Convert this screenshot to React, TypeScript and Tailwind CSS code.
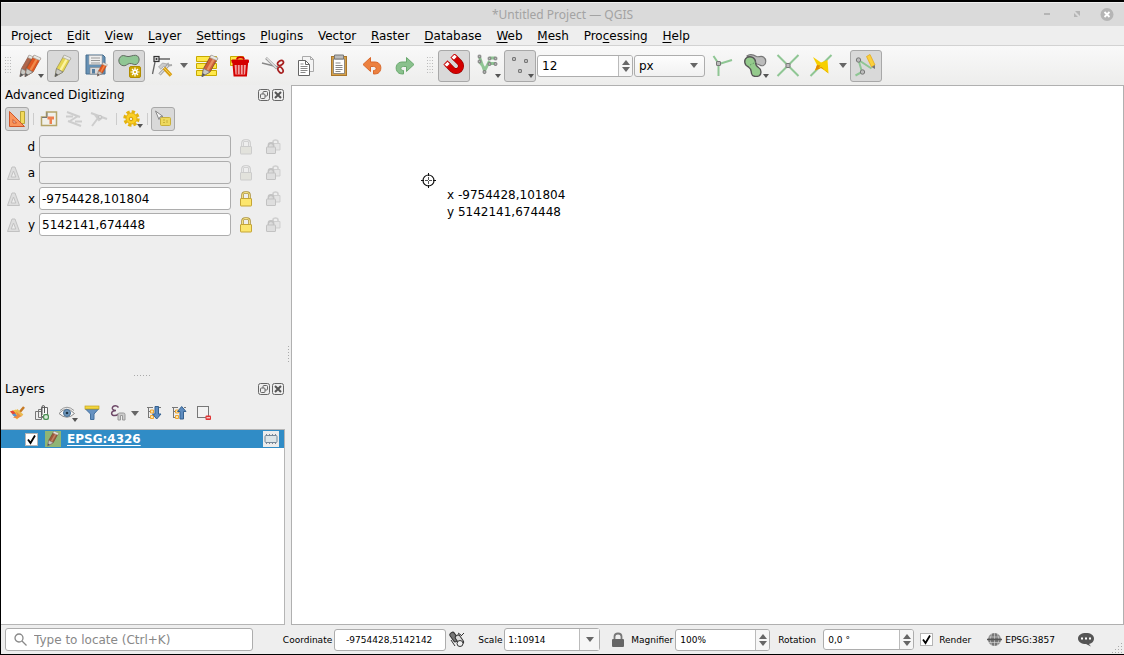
import { useState } from "react";
import type { ReactNode } from "react";
import clsx from "clsx";

type MenuEntry = { name: string; key: number };

const MENUS: MenuEntry[] = [
  { name: "Project", key: 3 },
  { name: "Edit", key: 0 },
  { name: "View", key: 0 },
  { name: "Layer", key: 0 },
  { name: "Settings", key: 0 },
  { name: "Plugins", key: 0 },
  { name: "Vector", key: 4 },
  { name: "Raster", key: 0 },
  { name: "Database", key: 0 },
  { name: "Web", key: 0 },
  { name: "Mesh", key: 0 },
  { name: "Processing", key: 3 },
  { name: "Help", key: 0 },
];

/* ---------- icons ---------- */

const Svg = ({ size = 24, children }: { size?: number; children: ReactNode }) => (
  <svg
    width={size}
    height={size}
    viewBox={`0 0 ${size} ${size}`}
    fill="none"
    className="shrink-0"
    aria-hidden="true"
  >
    {children}
  </svg>
);

const Pencil = ({
  body,
  light,
  edge,
  transform,
}: {
  body: string;
  light: string;
  edge: string;
  transform?: string;
}) => (
  <g transform={transform}>
    <path d="M4 22.5 5.5 14.5 13 1.5l6.500 3-7.500 13.500z" fill={body} stroke={edge} strokeWidth=".8" />
    <path d="M8.500 15.500 15.700 3l2 .9-7.200 12.800z" fill={light} />
    <path d="M13.200 1 20 4l-1.300 2.500-7-3z" fill="#e8e8e2" stroke="#999" strokeWidth=".6" />
    <path d="M5.500 14.500 12 18l-8 4.800z" fill="#c9c9c4" stroke="#777" strokeWidth=".7" />
    <path d="m4.600 19 2.600 1.700L4 22.800z" fill="#555" />
  </g>
);

const Caret = () => (
  <svg width="8" height="5" viewBox="0 0 8 5" aria-hidden="true">
    <path d="M0 0h8L4 5z" fill="#666" />
  </svg>
);

const PencilsIcon = () => (
  <Svg>
    <Pencil body="#b0654a" light="#8e6250" edge="#8a5a48" transform="translate(-2 0)" />
    <Pencil body="#e2561f" light="#f08a4a" edge="#a84a20" transform="translate(3 0)" />
  </Svg>
);

const PencilIcon = () => (
  <Svg>
    <Pencil body="#e6d650" light="#fbf3a0" edge="#a39a4c" />
  </Svg>
);

const SaveEditsIcon = () => (
  <Svg>
    <path d="M2 1h17l2 2v17H2z" fill="#6691b5" stroke="#486f8f" />
    <path d="M5 1.500h13v9H5z" fill="#eee" stroke="#aaa" strokeWidth=".6" />
    <path d="M7 4h9M7 6.500h9M7 9h9" stroke="#999" />
    <path d="M6 13.500h12v6.500H6z" fill="#dadada" stroke="#888" strokeWidth=".6" />
    <path d="M8 15h3v4.500H8z" fill="#567ea0" />
    <Pencil body="#e2561f" light="#f38a4a" edge="#b04a1c" transform="translate(11 8) scale(.62)" />
  </Svg>
);

const AddPolygonIcon = () => (
  <Svg>
    <path
      d="M4.500 2C7 .5 9 3 12 2.500S18 .3 20.500 2c2.500 2 2 6.500-1 8.300-2.500 1.300-4-1.300-7-.8-2.500.5-3.500 2.800-6.500 2.200C1 10.500.5 4.500 4.500 2z"
      fill="#8fc694"
      stroke="#606b60"
    />
    <rect x="12.500" y="12.500" width="11" height="11" rx="1.500" fill="#cda500" stroke="#b18d00" />
    <circle cx="18" cy="18" r="2.500" fill="#fff" />
    <path d="M18 13.500v9M13.500 18h9M15 15l6 6M21 15l-6 6" stroke="#fff" strokeWidth="1.200" />
    <circle cx="18" cy="18" r="1.100" fill="#cda500" />
  </Svg>
);

const VertexToolIcon = () => (
  <Svg>
    <path d="M8 5h12M5 8 2.500 20" stroke="#666" strokeWidth="1.300" />
    <rect x="4" y="2.500" width="5" height="5" fill="#ddd" stroke="#333" strokeWidth="1.200" />
    <circle cx="6.500" cy="5" r="1" fill="#333" />
    <path d="m18.500 11-9 9.500" stroke="#999" strokeWidth="3" />
    <path d="m18.500 11-9 9.500" stroke="#ddd" strokeWidth="1.200" />
    <path d="m14 14 7 7.500" stroke="#d99f15" strokeWidth="3.500" />
    <path d="m14 14 6.500 6.500" stroke="#f4cf4b" />
    <path d="m8.500 13 4-4 4.500 1-1.500 2.500-2-.2-2.500 3z" fill="#ccc" stroke="#999" strokeWidth=".7" />
    <path d="m17.500 9 1.500 2.500 3-.5" stroke="#aaa" strokeWidth="2" />
  </Svg>
);

const EditTableIcon = () => (
  <Svg>
    <path d="M1.500 2.500h20v5h-20zM1.500 9.500h20v5h-20zM1.500 16.500h20v5h-20z" fill="#ffe94a" stroke="#c7a900" />
    <Pencil body="#d0603a" light="#e89064" edge="#7e4630" transform="translate(3 0)" />
  </Svg>
);

const TrashIcon = () => (
  <Svg>
    <path d="M2.500 2.500h13v9h-13z" fill="#ffe94a" stroke="#c7a900" />
    <path d="M2.500 6.500h13" stroke="#c7a900" />
    <path d="M9 5.500c0-3 7-3 7 0" stroke="#d40000" strokeWidth="1.800" />
    <rect x="3.500" y="5.500" width="17.500" height="3.500" rx="1" fill="#d40000" />
    <path d="M5.500 10h13.500l-1 11.500H6.500z" fill="#f2a0a0" stroke="#d40000" strokeWidth="2" />
    <path d="M9.300 11v9.500M12.300 11v9.500M15.300 11v9.500" stroke="#d42020" strokeWidth="1.300" />
  </Svg>
);

const ScissorsIcon = () => (
  <Svg>
    <path d="m1 9 16 4" stroke="#888" strokeWidth="1.800" />
    <path d="m5 4 11 10.500" stroke="#999" strokeWidth="2.500" />
    <path d="m5.500 4 10 10" stroke="#e4e4e4" strokeWidth="1.200" />
    <ellipse cx="19.500" cy="9" rx="3.200" ry="2.200" transform="rotate(-35 19.500 9)" stroke="#a72020" strokeWidth="1.700" />
    <ellipse cx="19.500" cy="16" rx="3.200" ry="2.200" transform="rotate(55 19.500 16)" stroke="#a72020" strokeWidth="1.700" />
  </Svg>
);

const CopyIcon = () => (
  <Svg>
    <path d="M8.500 2.500h8l3 3v12h-11z" fill="#f4f4f4" stroke="#aaa" />
    <path d="M16.500 2.500v3h3" stroke="#aaa" />
    <path d="M4.500 6.500h7l4 4v11h-11z" fill="#fff" stroke="#666" />
    <path d="M11.500 6.500v4h4" stroke="#666" />
    <path d="M6.500 10h3M6.500 12.500h7M6.500 14.500h7M6.500 16.500h7M6.500 18.500h5" stroke="#888" />
  </Svg>
);

const PasteIcon = () => (
  <Svg>
    <rect x="4.500" y="2.500" width="15" height="19" fill="#d3a04a" stroke="#a9752a" />
    <path d="M6.500 5h11v14.500h-11z" fill="#fff" stroke="#777" strokeWidth=".8" />
    <path d="M7.500 1h9v4h-9z" fill="#bbb" stroke="#777" />
    <path d="M8.500 9h5M8.500 11.500h7M8.500 13.500h7M8.500 15.500h7M8.500 17.500h5" stroke="#888" />
  </Svg>
);

const UndoArrow = ({ flip }: { flip?: boolean }) => (
  <Svg>
    <path
      d="M3 10.500 10.500 3.500V8H15c6 0 7.500 7 4 10.500-1 1-3 1.500-5.500 1.500v-3.500c3.500 0 3.500-4 0-4h-3v5z"
      fill={flip ? "#8ac18d" : "#ec8140"}
      stroke={flip ? "#6aa96e" : "#d9682b"}
      transform={flip ? "matrix(-1 0 0 1 24 0)" : undefined}
    />
  </Svg>
);

const MagnetIcon = () => (
  <Svg>
    <g transform="translate(14 12) rotate(-45)">
      <path d="M-5-8v8a5 5 0 0 0 10 0v-8" stroke="#8c0000" strokeWidth="6" />
      <path d="M-5-8v8a5 5 0 0 0 10 0v-8" stroke="#d40000" strokeWidth="5" />
      <path d="M-7.500-9.500h5v4h-5zM2.500-9.500h5v4h-5z" fill="#fff" stroke="#c11" />
    </g>
  </Svg>
);

const nodes = (points: number[][], size = 3) =>
  points.map(([x, y]) => (
    <rect
      key={`${x}-${y}`}
      x={x - size / 2}
      y={y - size / 2}
      width={size}
      height={size}
      rx=".5"
      fill="#bbb"
      stroke="#777"
    />
  ));

const SnapAllIcon = () => (
  <Svg>
    <path d="m4.500 3 5 14 5-10M4.500 8l4 5 1 4M14.500 4h6M14.500 9.500h6" stroke="#8fc694" strokeWidth="2.800" />
    {nodes([[4.500, 2.500], [4.500, 7.500], [9.500, 18], [14.500, 4.500], [20.500, 4.500], [14.500, 10], [20.500, 10]], 2.600)}
  </Svg>
);

const SnapVertexIcon = () => (
  <Svg>{nodes([[6, 5], [18, 7], [12, 17]])}</Svg>
);

const TopologyIcon = () => (
  <Svg>
    <path d="m3.500 2 5 7.500V22M9 10l13-4" stroke="#8fc694" strokeWidth="2" />
    {nodes([[8.500, 9.500]], 4)}
  </Svg>
);

const OverlapIcon = () => (
  <Svg>
    <path
      d="M4 2c3-2.500 7-1 9.500.5 2 1 4.500-1 7 .5 3 2 3 7 0 8.500-3 1.200-4-1.500-7-1.500z"
      fill="#bbb"
      stroke="#777"
      strokeWidth="1.200"
    />
    <path
      d="M4 3.500c3.500-2 8.500 0 8.500 4.500 0 3 .5 4 3 5.500 3.500 2 3 7 .5 8.300-3 1.200-7 .7-7.500-2.300-.5-3 0-4.500-3-6.500C1 11 .5 5.500 4 3.500z"
      fill="#94ca8c"
      stroke="#555"
      strokeWidth="1.400"
    />
    <path d="m7 11 6-3" stroke="#5f9a62" strokeDasharray="1.500 1.500" />
  </Svg>
);

const CrossIcon = () => (
  <Svg>
    <path d="m1.500 1 21 21m0-21-21 21" stroke="#8fc694" strokeWidth="2" />
    {nodes([[12, 11.500]], 4)}
  </Svg>
);

const SelfSnapIcon = () => (
  <Svg>
    <path d="M22.500 1 1.500 22" stroke="#8fc694" strokeWidth="2" />
    <path d="M4 3 12 8.500 18.500 6l1 13.500L12 14l-6 2.500L8 11z" fill="#f7d000" />
    <path d="m8 11 3.500.5-2 2.500 3-1 7 6.500-2-2.500-5.500-3-6 2.500z" fill="#e38c00" />
  </Svg>
);

const TracingIcon = () => (
  <Svg>
    <path d="M1.500 21.500 8 18 4.500 6l13 8.500" stroke="#8fc694" strokeWidth="2" />
    <circle cx="4.500" cy="6" r="2.200" fill="#bbb" stroke="#777" />
    <circle cx="8.500" cy="18" r="2.200" fill="#bbb" stroke="#777" />
    <path d="m12.500 2.500 3.500-2L21 11l-3.500 2z" fill="#fbd03c" stroke="#e3a513" strokeWidth=".7" />
    <path d="m17.500 13 3.500-2v4z" fill="#777" />
  </Svg>
);

const CadIcon = () => (
  <Svg size={18}>
    <path d="M12.500 1.500h4v12h-4z" fill="#f2d95c" stroke="#b8a437" />
    <path d="M1.500 1.500v15h15z" fill="#fa955c" stroke="#d0562a" />
    <path d="M5 9.500V13h3.500z" fill="#ddd" stroke="#d0562a" />
  </Svg>
);

const ConstructionIcon = () => (
  <Svg size={18}>
    <path d="M6.500 2h10v13.500h-15V7h5z" fill="#f0f0ea" stroke="#b5a468" strokeWidth="1.500" />
    <path d="M2 7.500h5v-5" stroke="#777" />
    <path d="M7.500 6.500H14v3h-2V14H9.500V9.500h-2z" fill="#ee8050" />
  </Svg>
);

const ParallelIcon = () => (
  <Svg size={18}>
    <path d="m2 2 13 5M3 11l13 5M13 6 5 11M1 6.500h7M10 11.500h7" stroke="#cdcdcd" strokeWidth="2" />
  </Svg>
);

const PerpendicularIcon = () => (
  <Svg size={18}>
    <path d="m1 3 16 6M9.500 6 2 16M5 5l4 5 4-3" stroke="#cdcdcd" strokeWidth="2" />
    <circle cx="10" cy="7" r="1.700" fill="#ddd" stroke="#c4c4c4" />
  </Svg>
);

const GearIcon = () => (
  <Svg size={18}>
    <circle cx="8.500" cy="8.500" r="6.800" stroke="#e4b30f" strokeWidth="2.800" strokeDasharray="3.300 2.040" />
    <circle cx="8.500" cy="8.500" r="5.500" fill="#fbcf22" stroke="#e0ad0c" />
    <circle cx="8" cy="9" r="1.800" fill="#f5ead0" stroke="#cf9b04" />
  </Svg>
);

const FloaterIcon = () => (
  <Svg size={18}>
    <rect x="6.500" y="7.500" width="10" height="8" rx="1" fill="#eed95c" stroke="#c9b03a" />
    <path d="M9 10h2M9 12.500h2M13 10v3" stroke="#c9b03a" />
    <path d="M1.500 1 9 6.500l-3 .3L5 9.500z" fill="#f7f7f7" stroke="#888" />
  </Svg>
);

const DeltaIcon = () => (
  <Svg size={16}>
    <path d="M7 2h3l4.500 12.500h-12z" fill="#dedede" stroke="#c2c2c2" strokeLinejoin="round" />
    <path d="m8.500 6 2.300 6H6.200z" fill="#eee" stroke="#c2c2c2" strokeLinejoin="round" />
  </Svg>
);

const LockIcon = ({ on }: { on: boolean }) => (
  <Svg size={16}>
    <path d="M4.500 8V4q0-2.500 2.500-2.500h2q2.500 0 2.500 2.500v4" stroke={on ? "#ae9440" : "#c9c9c9"} strokeWidth="2.600" />
    <path d="M4.500 8V4q0-2.500 2.500-2.500h2q2.500 0 2.500 2.500v4" stroke={on ? "#f4e282" : "#e8e8e8"} />
    <rect x="2.500" y="7.500" width="11" height="7.500" rx=".5" fill={on ? "#fce66d" : "#e2e2dc"} stroke={on ? "#c5a536" : "#ccc"} />
  </Svg>
);

const RepeatLockIcon = () => (
  <Svg size={16}>
    <path d="M8 4.500V3q0-2 2.500-2T13 3v1.500" stroke="#cfcfcf" strokeWidth="1.600" />
    <path d="M6 4.500h9V11H6z" fill="#e4e4e4" stroke="#cfcfcf" />
    <path d="M3.500 8V6.500Q3.500 4 6 4T8.500 6.500V8" stroke="#c2c2c2" strokeWidth="1.800" />
    <rect x="1.500" y="8" width="9" height="6.500" rx=".5" fill="#dedede" stroke="#c2c2c2" />
  </Svg>
);

const StyleIcon = () => (
  <Svg size={16}>
    <path d="m1 6.500 6-2 5 6-4 4z" fill="#f4c33b" />
    <path d="m1 6.500 3-1 3 3-3 1z" fill="#e2463b" />
    <path d="m3 9.500 3-1 2.500 2.500L7 13z" fill="#5a93cf" />
    <path d="m7 6 6 5-5 2.500-4-1 4-2z" fill="#ee8a40" />
    <path d="m10 8 5-6" stroke="#c77a25" strokeWidth="2.500" />
    <path d="m7.500 5 6 5.500" stroke="#e9ba52" strokeWidth="2.500" />
  </Svg>
);

const AddGroupIcon = () => (
  <Svg size={16}>
    <path d="M1.500 6.500h6v8h-6zM4.500 4.500h6v8h-6z" fill="#eee" stroke="#777" />
    <path d="M7.500 2.500h6v9h-6z" fill="#f8f8f8" stroke="#666" />
    <path d="M8 10V2q0-1.500 1.300-1.500T10.500 2v6" stroke="#555" />
    <rect x="9.500" y="9.500" width="5" height="5" rx="1" fill="#6cab72" stroke="#4d8f54" />
    <path d="M12 10v4M10 12h4" stroke="#fff" />
  </Svg>
);

const EyeIcon = () => (
  <Svg size={16}>
    <path d="M0 8.500Q7.500 0 15.500 8.500 8 16 0 8.500z" fill="#f6f6f6" stroke="#888" />
    <path d="M1 5.500Q8-1 15 5.500" stroke="#999" />
    <circle cx="8" cy="8" r="3.500" fill="#6e96bb" stroke="#476e93" />
    <circle cx="8" cy="8" r="1.300" fill="#1f3344" />
  </Svg>
);

const FilterIcon = () => (
  <Svg size={16}>
    <path d="M1.500 4h13L10 9v5.500H6.500V9z" fill="#6691c0" stroke="#44719f" />
    <rect x="1" y="1" width="14" height="3" fill="#f2d63f" stroke="#c3a21a" strokeWidth=".7" />
  </Svg>
);

const ExpressionIcon = () => (
  <Svg size={16}>
    <path d="M8.500 2.500C6-.5 1.500 1 2.500 4q.7 1.500 3.500 1.500C1 5.500.5 9.500 3.500 10.500q3 .5 4.800-1.500" stroke="#6d4767" strokeWidth="1.500" />
    <path d="M8 15V9.500q0-1.500 1.500-1.500h4Q15 8 15 9.500V15h-2.500v-4.500h-2V15z" fill="#ccc" stroke="#999" />
  </Svg>
);

const TreeIcon = ({ up }: { up?: boolean }) => (
  <Svg size={16}>
    <path d="M1 2.500h6M2.500 2v11M3 6.500h2M3 12.500h2M13 2.500h2" stroke="#777" />
    <path d="M4.500 5h3v3h-3zM4.500 10.500h3v3h-3z" fill="#fbe3a8" stroke="#f0a630" />
    <path
      d="M9 1.500h3.500V9h2.500l-4.300 5L6.500 9H9z"
      fill="#5d8cc0"
      stroke="#35618f"
      transform={up ? "matrix(1 0 0 -1 0 15.500)" : undefined}
    />
  </Svg>
);

const RemoveLayerIcon = () => (
  <Svg size={16}>
    <rect x="1.500" y="1.500" width="11" height="11" fill="#f2f2f2" stroke="#777" />
    <rect x="9.500" y="10.500" width="5.500" height="4.500" rx="1" fill="#e03434" />
    <path d="M10.500 12.800H14" stroke="#fff" />
  </Svg>
);

/* ---------- controls ---------- */

const ToolButton = ({
  label,
  active,
  menu,
  small,
  children,
}: {
  label: string;
  active?: boolean;
  menu?: boolean;
  small?: boolean;
  children: ReactNode;
}) => (
  <button
    aria-label={label}
    className={clsx(
      "relative flex shrink-0 items-center justify-center rounded-[3px] border",
      small ? "h-6 w-6" : "h-8 w-8",
      active ? "border-[#a8a8a8] bg-[#d9d9d9]" : "border-transparent",
    )}
  >
    {children}
    {menu && (
      <svg
        className={clsx("absolute", small ? "right-0 bottom-[2px]" : "right-px bottom-[3px]")}
        width="6"
        height="4"
        viewBox="0 0 6 4"
        aria-hidden="true"
      >
        <path d="M0 0h6L3 4z" fill="#555" />
      </svg>
    )}
  </button>
);

const MenuArrow = ({ label }: { label: string }) => (
  <button aria-label={label} className="flex h-8 w-[10px] shrink-0 items-center justify-center">
    <Caret />
  </button>
);

const Grip = () => (
  <svg width="6" height="20" viewBox="0 0 6 20" aria-hidden="true" className="shrink-0">
    <path d="M.5 1v18M3 1v18M5.500 1v18" stroke="#bbb" strokeDasharray="1 2" />
  </svg>
);

const Separator = () => <span className="h-3 w-px shrink-0 bg-[#ccc]" />;

const SpinBox = ({
  label,
  id,
  value,
  className,
}: {
  label: string;
  id: string;
  value: string;
  className: string;
}) => {
  const [text, setText] = useState(value);
  return (
    <div
      className={clsx(
        "flex shrink-0 overflow-hidden rounded-[3px] border border-[#adadad] bg-white",
        className,
      )}
    >
      <input
        id={id}
        aria-label={label}
        className="min-w-0 flex-1 px-1 outline-none"
        value={text}
        onChange={(e) => setText(e.target.value)}
      />
      <div className="flex w-[14px] flex-col items-center justify-center gap-[2px] border-l border-[#bbb] bg-[#f6f6f6]">
        <button aria-label={`${label} up`} className="flex rotate-180">
          <Caret />
        </button>
        <button aria-label={`${label} down`} className="flex">
          <Caret />
        </button>
      </div>
    </div>
  );
};

const Check = ({ label, id }: { label: string; id?: string }) => {
  const [checked, setChecked] = useState(true);
  return (
    <span className="relative flex h-[13px] w-[13px] shrink-0">
      <input
        id={id}
        type="checkbox"
        aria-label={label}
        checked={checked}
        onChange={(e) => setChecked(e.target.checked)}
        className="h-[13px] w-[13px] appearance-none border border-[#b5b5b5] bg-white"
      />
      {checked && (
        <svg
          className="pointer-events-none absolute inset-0"
          width="13"
          height="13"
          viewBox="0 0 13 13"
          fill="none"
          aria-hidden="true"
        >
          <path d="m3 6.500 2.500 3.500L10 2.500" stroke="#000" strokeWidth="1.800" />
        </svg>
      )}
    </span>
  );
};

const PanelTitle = ({ title }: { title: string }) => (
  <div className="flex h-5 shrink-0 items-center pr-px pl-1">
    <h2 className="flex-1">{title}</h2>
    <button aria-label={`Float ${title}`} className="mr-[2px]">
      <svg width="12" height="12" viewBox="0 0 12 12" fill="none" stroke="#666">
        <rect x=".5" y=".5" width="11" height="11" rx="2" />
        <rect x="5" y="2.500" width="4.500" height="4.500" rx="1" />
        <rect x="2.500" y="5" width="4.500" height="4.500" rx="1" fill="#eee" />
      </svg>
    </button>
    <button aria-label={`Close ${title}`}>
      <svg width="12" height="12" viewBox="0 0 12 12" fill="none" stroke="#666">
        <rect x=".5" y=".5" width="11" height="11" rx="2" />
        <path d="m3 3 6 6m0-6-6 6" strokeWidth="2" stroke="#555" />
      </svg>
    </button>
  </div>
);

type Coordinate = { name: string; value: string; locked: boolean; delta: boolean };

const COORDINATES: Coordinate[] = [
  { name: "d", value: "", locked: false, delta: false },
  { name: "a", value: "", locked: false, delta: true },
  { name: "x", value: "-9754428,101804", locked: true, delta: true },
  { name: "y", value: "5142141,674448", locked: true, delta: true },
];

/* ---------- sections ---------- */

const TitleBar = () => (
  <header className="relative flex h-6 shrink-0 items-center justify-end gap-[20px] border-t border-[#efefef] bg-[#dadada] pr-[10px]">
    <h1 className="absolute inset-x-0 text-center font-['Noto_Sans'] text-[12px] text-[#a3a3a3]">
      *Untitled Project — QGIS
    </h1>
    <button aria-label="Minimize" className="relative">
      <svg width="6" height="14" viewBox="0 0 6 14">
        <path d="M0 5h6v2H0z" fill="#b5b5b5" />
      </svg>
    </button>
    <button aria-label="Maximize" className="relative ml-[4px]">
      <svg width="6" height="14" viewBox="0 0 6 14">
        <path d="M1 3h5v5zM0 5l4 4H0z" fill="#b5b5b5" />
      </svg>
    </button>
    <button aria-label="Close" className="relative">
      <svg width="14" height="14" viewBox="0 0 14 14">
        <circle cx="7" cy="6.500" r="6.500" fill="#b5b5b5" />
        <path d="m4.500 4 5 5m0-5-5 5" stroke="#fff" strokeWidth="1.800" />
      </svg>
    </button>
  </header>
);

const MenuBar = () => (
  <nav className="flex h-[19px] w-[696px] max-w-full shrink-0 items-center justify-between pl-[3px]">
    {MENUS.map(({ name, key }) => (
      <button key={name} className="px-[7px]">
        {name.slice(0, key)}
        <span className="underline underline-offset-2">{name[key]}</span>
        {name.slice(key + 1)}
      </button>
    ))}
  </nav>
);

const Toolbar = () => (
  <div className="flex h-10 shrink-0 items-center gap-px border-t border-[#d2d2d2] bg-linear-to-b from-[#f9f9f9] to-[#ededec] pl-1">
    <Grip />
    <span className="w-px" />
    <ToolButton label="Current edits" menu>
      <PencilsIcon />
    </ToolButton>
    <ToolButton label="Toggle editing" active>
      <PencilIcon />
    </ToolButton>
    <ToolButton label="Save layer edits">
      <SaveEditsIcon />
    </ToolButton>
    <ToolButton label="Add polygon feature" active>
      <AddPolygonIcon />
    </ToolButton>
    <ToolButton label="Vertex tool">
      <VertexToolIcon />
    </ToolButton>
    <MenuArrow label="Vertex tool menu" />
    <span />
    <ToolButton label="Modify attributes">
      <EditTableIcon />
    </ToolButton>
    <ToolButton label="Delete selected">
      <TrashIcon />
    </ToolButton>
    <ToolButton label="Cut features">
      <ScissorsIcon />
    </ToolButton>
    <ToolButton label="Copy features">
      <CopyIcon />
    </ToolButton>
    <ToolButton label="Paste features">
      <PasteIcon />
    </ToolButton>
    <ToolButton label="Undo">
      <UndoArrow />
    </ToolButton>
    <ToolButton label="Redo">
      <UndoArrow flip />
    </ToolButton>
    <div className="flex w-[15px] shrink-0 justify-center">
      <Grip />
    </div>
    <ToolButton label="Enable snapping" active>
      <MagnetIcon />
    </ToolButton>
    <ToolButton label="All layers" menu>
      <SnapAllIcon />
    </ToolButton>
    <ToolButton label="Vertex" active menu>
      <SnapVertexIcon />
    </ToolButton>
    <SpinBox id="tolerance" label="Snapping tolerance" value="12" className="h-[22px] w-24" />
    <div className="relative flex h-[22px] w-[71px] shrink-0 items-center">
      <select
        aria-label="Snapping units"
        className="h-full w-full appearance-none rounded-[3px] border border-[#adadad] bg-linear-to-b from-[#fdfdfd] to-[#f1f1f1] px-1"
      >
        <option>px</option>
        <option>meters</option>
      </select>
      <span className="pointer-events-none absolute right-[7px] flex">
        <Caret />
      </span>
    </div>
    <ToolButton label="Topological editing">
      <TopologyIcon />
    </ToolButton>
    <ToolButton label="Avoid overlap" menu>
      <OverlapIcon />
    </ToolButton>
    <ToolButton label="Snapping on intersection">
      <CrossIcon />
    </ToolButton>
    <ToolButton label="Self-snapping">
      <SelfSnapIcon />
    </ToolButton>
    <MenuArrow label="Self-snapping menu" />
    <span />
    <ToolButton label="Enable tracing" active>
      <TracingIcon />
    </ToolButton>
  </div>
);

const DigitizingPanel = () => {
  const [values, setValues] = useState(COORDINATES.map((c) => c.value));
  return (
    <section className="flex flex-1 flex-col">
      <PanelTitle title="Advanced Digitizing" />
      <div className="mt-px mb-px flex h-[26px] items-center pl-1">
        <ToolButton small label="Enable advanced digitizing" active>
          <CadIcon />
        </ToolButton>
        <span className="w-1" />
        <Separator />
        <span className="w-[3px]" />
        <ToolButton small label="Construction mode">
          <ConstructionIcon />
        </ToolButton>
        <span className="w-px" />
        <ToolButton small label="Parallel">
          <ParallelIcon />
        </ToolButton>
        <span className="w-px" />
        <ToolButton small label="Perpendicular">
          <PerpendicularIcon />
        </ToolButton>
        <span className="w-[5px]" />
        <Separator />
        <span className="w-[3px]" />
        <ToolButton small label="Snap to common angles" menu>
          <GearIcon />
        </ToolButton>
        <span className="w-[3px]" />
        <Separator />
        <span className="w-[3px]" />
        <ToolButton small label="Toggle floater" active>
          <FloaterIcon />
        </ToolButton>
      </div>
      <div className="mt-[2px] flex flex-col gap-[3px]">
        {COORDINATES.map(({ name, locked, delta }, i) => (
          <div key={name} className="flex h-[23px] items-center px-1">
            <span className="flex w-[17px]">
              {delta && (
                <button aria-label={`Relative ${name}`}>
                  <DeltaIcon />
                </button>
              )}
            </span>
            <label htmlFor={`cad-${name}`} className="w-[17px] pr-1 text-right">
              {name}
            </label>
            <input
              id={`cad-${name}`}
              className={clsx(
                "h-full min-w-0 flex-1 rounded-[3px] border border-[#adadad] px-[2px] outline-none",
                locked ? "bg-white" : "bg-[#eee]",
              )}
              disabled={!locked}
              value={values[i]}
              onChange={(e) =>
                setValues(values.map((v, n) => (n === i ? e.target.value : v)))
              }
            />
            <button aria-label={`Lock ${name}`} className="ml-[7px]">
              <LockIcon on={locked} />
            </button>
            <button aria-label={`Repeat lock ${name}`} className="ml-[11px]">
              <RepeatLockIcon />
            </button>
          </div>
        ))}
      </div>
    </section>
  );
};

const LayersPanel = () => (
  <section className="flex h-[246px] shrink-0 flex-col">
    <PanelTitle title="Layers" />
    <div className="mb-[2px] flex h-7 items-center pl-1">
      <ToolButton small label="Layer styling">
        <StyleIcon />
      </ToolButton>
      <span className="w-px" />
      <ToolButton small label="Add group">
        <AddGroupIcon />
      </ToolButton>
      <span className="w-px" />
      <ToolButton small label="Manage map themes" menu>
        <EyeIcon />
      </ToolButton>
      <span className="w-px" />
      <ToolButton small label="Filter legend">
        <FilterIcon />
      </ToolButton>
      <span className="w-[2px]" />
      <ToolButton small label="Filter by expression">
        <ExpressionIcon />
      </ToolButton>
      <MenuArrow label="Expression menu" />
      <span className="w-[2px]" />
      <ToolButton small label="Expand all">
        <TreeIcon />
      </ToolButton>
      <span className="w-px" />
      <ToolButton small label="Collapse all">
        <TreeIcon up />
      </ToolButton>
      <span className="w-px" />
      <ToolButton small label="Remove layer">
        <RemoveLayerIcon />
      </ToolButton>
    </div>
    <div className="flex-1 border border-l-0 border-[#b5b5b5] bg-white">
      <div className="flex h-[18px] items-center bg-[#308cc6] pr-[5px] pl-6 text-white">
        <Check label="EPSG:4326 visibility" />
        <span className="ml-[7px] flex bg-[#8fb574]">
          <Svg size={16}>
            <Pencil body="#a05a3a" light="#c08464" edge="#6b4230" transform="translate(0 -.5) scale(.68)" />
          </Svg>
        </span>
        <span className="ml-[6px] flex-1 font-bold underline underline-offset-2">
          EPSG:4326
        </span>
        <button aria-label="Temporary scratch layer" className="flex bg-[#ececec]">
          <svg width="16" height="16" viewBox="0 0 16 16" fill="none">
            <path d="M3.500 3v10M6.500 3v10M9.500 3v10M12.500 3v10" stroke="#789" />
            <rect x="2" y="4.500" width="12" height="7" rx="1" fill="#dde5e8" stroke="#789" />
          </svg>
        </button>
      </div>
    </div>
  </section>
);

const MapCanvas = () => (
  <main className="relative flex-1 border border-[#b0b0b0] bg-white">
    <svg
      className="absolute top-[87px] left-[129px]"
      width="15"
      height="15"
      viewBox="0 0 15 15"
      fill="none"
      stroke="#111"
    >
      <circle cx="7.500" cy="7.500" r="5.500" strokeWidth="1.200" />
      <path d="M7.500 0v3M7.500 12v3M0 7.500h3M12 7.500h3" />
      <path d="M7.500 4v3M7.500 8v3M4 7.500h3M8 7.500h3" stroke="#555" />
    </svg>
    <p className="absolute top-[101px] left-[155px] leading-[17px]">
      x -9754428,101804
      <br />y 5142141,674448
    </p>
  </main>
);

const StatusLabel = ({
  id,
  text,
  className,
}: {
  id: string;
  text: string;
  className?: string;
}) => (
  <label htmlFor={id} className={clsx("shrink-0 whitespace-nowrap", className)}>
    {text}
  </label>
);

const StatusBar = () => (
  <footer className="flex h-[29px] shrink-0 items-center pl-1 text-[9px]">
    <div className="flex h-[23px] w-[248px] items-center gap-[6px] rounded-[3px] border border-[#adadad] bg-white px-2">
      <svg width="14" height="14" viewBox="0 0 14 14" fill="none" stroke="#888" strokeWidth="1.300">
        <circle cx="5" cy="5" r="4" />
        <path d="m8 8 4.500 4.500" />
      </svg>
      <input
        aria-label="Locator"
        placeholder="Type to locate (Ctrl+K)"
        className="min-w-0 flex-1 text-[12px] outline-none placeholder:text-[#888]"
      />
    </div>
    <span className="flex-1" />
    <StatusLabel id="coordinate" text="Coordinate" />
    <input
      id="coordinate"
      defaultValue="-9754428,5142142"
      className="ml-[2px] h-[22px] w-28 shrink-0 rounded-[3px] border border-[#adadad] bg-white pr-[2px] text-center outline-none"
    />
    <button aria-label="Toggle extents" className="ml-[3px]">
      <svg width="17" height="17" viewBox="0 0 17 17" fill="none" stroke="#333">
        <rect x="2.500" y="1" width="5" height="10" rx="2" fill="#777" transform="rotate(-35 5 6)" />
        <rect x="8" y="4" width="5" height="10" rx="2" fill="#ddd" transform="rotate(-35 10 9)" />
        <circle cx="11" cy="12.500" r="3" fill="#eee" />
        <path d="m2 9 4 6M9 2l3 2M12 5l3-3" />
      </svg>
    </button>
    <StatusLabel id="scale" text="Scale" className="ml-3 w-6" />
    <div className="relative ml-[2px] flex h-[23px] w-24 shrink-0 items-center">
      <select
        id="scale"
        className="h-full w-full appearance-none rounded-[3px] border border-[#adadad] bg-white px-[3px]"
      >
        <option>1:10914</option>
        <option>1:25000</option>
      </select>
      <span className="pointer-events-none absolute inset-y-px right-px flex w-5 items-center justify-center border-l border-[#bbb] bg-[#f6f6f6]">
        <Caret />
      </span>
    </div>
    <button aria-label="Lock scale" className="ml-3">
      <svg width="12" height="16" viewBox="0 0 12 16" fill="none">
        <path d="M2.500 8V4.500Q2.500 1.500 6 1.500t3.500 3V8" stroke="#777" strokeWidth="1.800" />
        <rect y="7" width="12" height="8" rx="1" fill="#666" />
      </svg>
    </button>
    <StatusLabel id="magnifier" text="Magnifier" className="ml-[7px] w-[42px]" />
    <SpinBox id="magnifier" label="Magnifier" value="100%" className="ml-[2px] h-[22px] w-[95px]" />
    <StatusLabel id="rotation" text="Rotation" className="ml-2 w-[38px]" />
    <SpinBox id="rotation" label="Rotation" value="0,0 °" className="ml-[7px] h-[21px] w-[91px]" />
    <span className="ml-[6px] flex">
      <Check label="Render" id="render" />
    </span>
    <label htmlFor="render" className="ml-[6px]">
      Render
    </label>
    <button className="ml-4 flex items-center gap-[3px]">
      <svg width="15" height="15" viewBox="0 0 15 15" fill="none">
        <circle cx="7.500" cy="7.500" r="6.500" fill="#777" />
        <path d="M1 5h13M1 10.500h13M7.500 1v13M4.500 2q-3 5.500 0 11M10.500 2q3 5.500 0 11" stroke="#ddd" strokeWidth=".6" />
        <path d="M0 7.500h15" stroke="#555" strokeWidth="1.500" />
      </svg>
      EPSG:3857
    </button>
    <button aria-label="Messages" className="ml-[23px]">
      <svg width="16" height="15" viewBox="0 0 16 15">
        <path d="M8 1c4.500 0 8 2 8 5.500S13 11.500 11 12l2 2.500L8 12C3.500 12 0 10 0 6.500S3.500 1 8 1z" fill="#555" />
        <path d="M3 5.500h2v2H3zM7 5.500h2v2H7zM11 5.500h2v2h-2z" fill="#fff" />
      </svg>
    </button>
    <svg width="12" height="12" viewBox="0 0 12 12" className="mr-px ml-[17px] self-end" aria-hidden="true">
      <path d="M1 10.500h10M4 7.500h7M7 4.500h4M10 1.500h1" stroke="#aaa" strokeDasharray="1 2" />
    </svg>
  </footer>
);

const App = () => (
  <div className="flex min-h-screen flex-col border-t-2 border-b border-l border-black bg-[#eee] font-['DejaVu_Sans',sans-serif] text-[12px] leading-4 text-black">
    <TitleBar />
    <MenuBar />
    <Toolbar />
    <div className="flex flex-1">
      <aside className="flex w-[284px] shrink-0 flex-col">
        <DigitizingPanel />
        <div className="flex h-2 items-center justify-center">
          <svg width="18" height="1" viewBox="0 0 18 1" aria-hidden="true">
            <path d="M0 .5h18" stroke="#aaa" strokeDasharray="1 2" />
          </svg>
        </div>
        <LayersPanel />
      </aside>
      <div className="flex w-[6px] shrink-0 items-center justify-center">
        <svg width="1" height="18" viewBox="0 0 1 18" aria-hidden="true">
          <path d="M.5 0v18" stroke="#aaa" strokeDasharray="1 2" />
        </svg>
      </div>
      <MapCanvas />
    </div>
    <StatusBar />
  </div>
);

export default App;
